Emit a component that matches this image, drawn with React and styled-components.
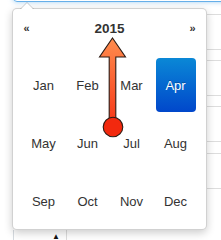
import React from "react";
import styled, { createGlobalStyle } from "styled-components";

const Global = createGlobalStyle`
  html, body { margin: 0; padding: 0; background: #fff; }
  body { font-family: "Liberation Sans", Arial, sans-serif; }
`;

const Page = styled.div`
  position: relative;
  width: 221px;
  height: 240px;
  overflow: hidden;
  background: #fff;
`;

const Input = styled.div`
  margin: -18px 0 0 13px;
  width: 230px;
  height: 18px;
  border: 1px solid #66afe9;
  border-radius: 4px;
  box-shadow: 0 0 5px rgba(102, 175, 233, 0.6);
`;

const Lines = styled.div`
  margin: 12px 0 0 13px;
  display: flex;
  flex-direction: column;
`;

const LineRow = styled.div`
  height: 34px;
  border-top: 1px solid #ddd;
  border-bottom: 1px solid #ddd;
  margin-top: ${(p) => p.$gap}px;
`;

const Footer = styled.div`
  margin: 41px 0 0 13px;
  width: 54px;
  height: 12px;
  border-left: 1px solid #d6dbe0;
  border-right: 1px solid #ddd;
  display: flex;
  justify-content: flex-end;
  padding-right: 6px;
  box-sizing: border-box;
  font-size: 8px;
  line-height: 14px;
  color: #111;
`;

const Popup = styled.div`
  position: absolute;
  left: 12px;
  top: 8px;
  width: 195px;
  height: 222px;
  box-sizing: border-box;
  background: #fff;
  border: 1px solid rgba(0, 0, 0, 0.18);
  border-radius: 5px;
  box-shadow: 0 3px 8px rgba(0, 0, 0, 0.2);
  display: flex;
  flex-direction: column;
  align-items: center;

  &::before {
    content: "";
    position: absolute;
    top: -7px;
    left: 7px;
    border-left: 7px solid transparent;
    border-right: 7px solid transparent;
    border-bottom: 7px solid rgba(0, 0, 0, 0.18);
  }
  &::after {
    content: "";
    position: absolute;
    top: -6px;
    left: 8px;
    border-left: 6px solid transparent;
    border-right: 6px solid transparent;
    border-bottom: 6px solid #fff;
  }
`;

const Header = styled.div`
  margin-top: 9px;
  width: 180px;
  height: 20px;
  display: flex;
  justify-content: space-between;
  align-items: center;
  font-weight: bold;
  color: #333;
`;

const Nav = styled.span`
  font-size: 11px;
  width: 14px;
  text-align: center;
`;

const Year = styled.span`
  font-size: 13.5px;
`;

const Months = styled.div`
  margin-top: 20px;
  display: grid;
  grid-template-columns: repeat(4, 40px);
  grid-auto-rows: 54px;
  column-gap: 4px;
  row-gap: 4px;
`;

const Month = styled.span`
  display: flex;
  align-items: center;
  justify-content: center;
  border-radius: 4px;
  font-size: 13px;
  color: ${(p) => (p.$active ? "#fff" : "#333")};
  background: ${(p) =>
    p.$active ? "linear-gradient(to bottom, #0a88d6, #0147cb)" : "transparent"};
  text-shadow: ${(p) => (p.$active ? "0 -1px 0 rgba(0,0,0,0.25)" : "none")};
`;

const Overlay = styled.svg`
  position: absolute;
  left: 0;
  top: 0;
  pointer-events: none;
`;

const months = ["Jan", "Feb", "Mar", "Apr", "May", "Jun", "Jul", "Aug", "Sep", "Oct", "Nov", "Dec"];
const gaps = [0, 10, 10, 11];

export default function App() {
  return (
    <>
      <Global />
      <Page>
        <Input />
        <Lines>
          {gaps.map((g, i) => (
            <LineRow key={i} $gap={g} />
          ))}
        </Lines>
        <Footer>▲</Footer>
        <Popup>
          <Header>
            <Nav>«</Nav>
            <Year>2015</Year>
            <Nav>»</Nav>
          </Header>
          <Months>
            {months.map((m) => (
              <Month key={m} $active={m === "Apr"}>
                {m}
              </Month>
            ))}
          </Months>
        </Popup>
        <Overlay width="221" height="240" viewBox="0 0 221 240">
          <defs>
            <linearGradient id="arrowFill" gradientUnits="userSpaceOnUse" x1="0" y1="38" x2="0" y2="137">
              <stop offset="0" stopColor="#ff8d4e" />
              <stop offset="1" stopColor="#f4290e" />
            </linearGradient>
          </defs>
          <path
            d="M112.5 38 L125.5 57 L115.8 57 L115.8 119 L109.2 119 L109.2 57 L99.5 57 Z"
            fill="url(#arrowFill)"
            stroke="#2a1a14"
            strokeWidth="1.1"
            strokeLinejoin="miter"
          />
          <circle cx="113" cy="127" r="9.8" fill="#f2290e" stroke="#2a1a14" strokeWidth="1.1" />
        </Overlay>
      </Page>
    </>
  );
}
